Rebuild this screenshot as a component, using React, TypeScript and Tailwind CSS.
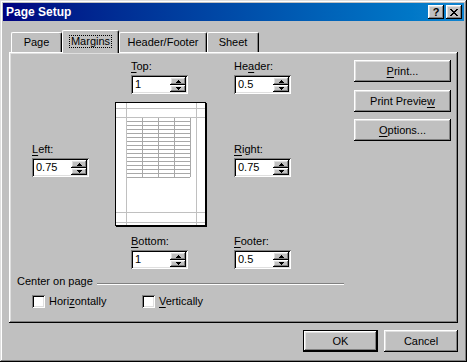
import React from 'react';

// classic 3D edges
const raised =
  'shadow-[inset_-1px_-1px_0_#000,inset_1px_1px_0_#fff,inset_-2px_-2px_0_#808080,inset_2px_2px_0_#dfdfdf]';
const sunken =
  'shadow-[inset_1px_1px_0_#808080,inset_-1px_-1px_0_#fff,inset_2px_2px_0_#000,inset_-2px_-2px_0_#dfdfdf]';

function Key({ children }: { children: React.ReactNode }) {
  return <span className="underline underline-offset-[2px]">{children}</span>;
}

function Arrow({ up }: { up?: boolean }) {
  return (
    <svg width="5" height="3" viewBox="0 0 5 3" shapeRendering="crispEdges">
      {up ? (
        <path d="M2 0h1v1h-1zM1 1h3v1h-3zM0 2h5v1h-5z" fill="#000" />
      ) : (
        <path d="M0 0h5v1h-5zM1 1h3v1h-3zM2 2h1v1h-1z" fill="#000" />
      )}
    </svg>
  );
}

function Spinner({ value }: { value: string }) {
  return (
    <div className={`flex h-[19px] w-[57px] bg-white p-[2px] ${sunken}`}>
      <div className="flex flex-1 items-center pl-[2px] leading-[13px]">{value}</div>
      <div className="flex w-[16px] flex-col">
        <div className={`flex h-[8px] items-center justify-center bg-[#c0c0c0] ${raised}`}>
          <Arrow up />
        </div>
        <div className={`flex h-[7px] items-center justify-center bg-[#c0c0c0] ${raised}`}>
          <Arrow />
        </div>
      </div>
    </div>
  );
}

function Field({ label, value, className = '' }: { label: React.ReactNode; value: string; className?: string }) {
  return (
    <div className={`flex flex-col ${className}`}>
      <div className="h-[13px] leading-[13px]">{label}</div>
      <div className="mt-[2px]">
        <Spinner value={value} />
      </div>
    </div>
  );
}

function Button({ children, width, isDefault }: { children: React.ReactNode; width: string; isDefault?: boolean }) {
  const edge = isDefault
    ? 'shadow-[inset_0_0_0_1px_#000,inset_-2px_-2px_0_#000,inset_2px_2px_0_#fff,inset_-3px_-3px_0_#808080,inset_3px_3px_0_#dfdfdf]'
    : raised;
  return (
    <div className={`flex h-[22px] items-center justify-center bg-[#c0c0c0] leading-[13px] ${width} ${edge}`}>
      {children}
    </div>
  );
}

function Checkbox({ label, className = '' }: { label: React.ReactNode; className?: string }) {
  return (
    <div className={`flex items-center ${className}`}>
      <div className={`h-[13px] w-[13px] bg-white ${sunken}`} />
      <span className="ml-[4px] leading-[13px]">{label}</span>
    </div>
  );
}

function PagePreview() {
  const rows = Array.from({ length: 16 }, (_, i) => 14 + i * 4);
  const cols = [10, 26, 42, 58, 74];
  return (
    <div className="h-[124px] w-[91px] border border-black bg-white shadow-[1px_1px_0_#000]">
      <svg width="89" height="122" viewBox="0 0 89 122" shapeRendering="crispEdges">
        {rows.map((y) => (
          <line key={`r${y}`} x1="10" x2="74" y1={y + 0.5} y2={y + 0.5} stroke="#a8a8a8" />
        ))}
        {cols.map((x) => (
          <line key={`c${x}`} x1={x + 0.5} x2={x + 0.5} y1="14" y2="74" stroke="#a8a8a8" />
        ))}
        {[5, 14, 109, 119].map((y) => (
          <line key={`m${y}`} x1="0" x2="89" y1={y + 0.5} y2={y + 0.5} stroke="#c0c0c0" />
        ))}
        {[10, 80].map((x) => (
          <line key={`v${x}`} x1={x + 0.5} x2={x + 0.5} y1="0" y2="122" stroke="#c0c0c0" />
        ))}
      </svg>
    </div>
  );
}

function TitleBar() {
  return (
    <div className="flex h-[18px] items-center bg-linear-to-r from-[#000080] to-[#1084d0] pl-[3px] pr-[2px]">
      <span className="flex-1 text-[12px] font-bold leading-[14px] text-white">Page Setup</span>
      <div className={`flex h-[14px] w-[16px] items-center justify-center bg-[#c0c0c0] text-[11px] font-bold leading-[11px] ${raised}`}>
        ?
      </div>
      <div className={`ml-[2px] flex h-[14px] w-[16px] items-center justify-center bg-[#c0c0c0] ${raised}`}>
        <svg width="8" height="7" viewBox="0 0 8 7" shapeRendering="crispEdges">
          <path
            d="M0 0h2v1h-2zM6 0h2v1h-2zM1 1h2v1h-2zM5 1h2v1h-2zM2 2h4v1h-4zM3 3h2v1h-2zM2 4h4v1h-4zM1 5h2v1h-2zM5 5h2v1h-2zM0 6h2v1h-2zM6 6h2v1h-2z"
            fill="#000"
          />
        </svg>
      </div>
    </div>
  );
}

function Tabs() {
  const tab =
    'flex h-[20px] justify-center border-l border-t border-r border-l-white border-t-white border-r-black rounded-tl-[2px] rounded-tr-[2px] bg-[#c0c0c0] pt-[3px] leading-[13px] shadow-[inset_-1px_0_0_#808080]';
  return (
    <div className="ml-[2px] mt-[9px] flex h-[22px] items-end">
      <div className={`${tab} w-[51px]`}>Page</div>
      <div className="relative z-10 -mb-[1px] flex h-[23px] w-[57px] justify-center rounded-tl-[2px] rounded-tr-[2px] border-l border-t border-r border-l-white border-t-white border-r-black bg-[#c0c0c0] pt-[4px] shadow-[inset_-1px_0_0_#808080]">
        <span className="h-[13px] border border-dotted border-black px-[1px] leading-[11px]">Margins</span>
      </div>
      <div className={`${tab} w-[88px]`}>Header/Footer</div>
      <div className={`${tab} w-[52px]`}>Sheet</div>
    </div>
  );
}

export default function App() {
  return (
    <div className="h-[362px] w-[467px] overflow-hidden bg-[#c0c0c0] p-[3px] font-[family-name:'Liberation_Sans',Arial,sans-serif] text-[11px] text-black shadow-[inset_-1px_-1px_0_#000,inset_1px_1px_0_#dfdfdf,inset_-2px_-2px_0_#808080,inset_2px_2px_0_#fff]">
      <TitleBar />
      <div className="flex flex-col px-[6px]">
        <Tabs />

        {/* Margins tab body */}
        <div className={`flex h-[271px] bg-[#c0c0c0] ${raised}`}>
          <div className="flex w-[336px] flex-col pt-[8px]">
            <div className="flex">
              <Field className="ml-[122px]" label={<><Key>T</Key>op:</>} value="1" />
              <Field className="ml-[46px]" label={<>He<Key>a</Key>der:</>} value="0.5" />
            </div>

            <div className="mt-[8px] flex items-start">
              <Field className="ml-[23px] mt-[41px]" label={<><Key>L</Key>eft:</>} value="0.75" />
              <div className="ml-[26px]">
                <PagePreview />
              </div>
              <Field className="ml-[28px] mt-[41px]" label={<><Key>R</Key>ight:</>} value="0.75" />
            </div>

            <div className="mt-[9px] flex">
              <Field className="ml-[122px]" label={<><Key>B</Key>ottom:</>} value="1" />
              <Field className="ml-[46px]" label={<><Key>F</Key>ooter:</>} value="0.5" />
            </div>

            <div className="ml-[8px] mr-[1px] mt-[6px] flex items-start">
              <span className="leading-[13px]">Center on page</span>
              <div className="ml-[4px] mt-[8px] h-[2px] flex-1 border-t border-b border-t-[#808080] border-b-white" />
            </div>

            <div className="ml-[23px] mt-[7px] flex">
              <Checkbox className="w-[110px]" label={<>Hori<Key>z</Key>ontally</>} />
              <Checkbox label={<><Key>V</Key>ertically</>} />
            </div>
          </div>

          <div className="ml-[9px] flex flex-col pt-[8px]">
            <Button width="w-[97px]">
              <span><Key>P</Key>rint...</span>
            </Button>
            <div className="mt-[8px]">
              <Button width="w-[97px]">
                <span>Print Previe<Key>w</Key></span>
              </Button>
            </div>
            <div className="mt-[7px]">
              <Button width="w-[97px]">
                <span><Key>O</Key>ptions...</span>
              </Button>
            </div>
          </div>
        </div>

        <div className="mt-[7px] flex justify-end gap-[6px]">
          <Button width="w-[75px]" isDefault>
            OK
          </Button>
          <Button width="w-[74px]">Cancel</Button>
        </div>
      </div>
    </div>
  );
}
